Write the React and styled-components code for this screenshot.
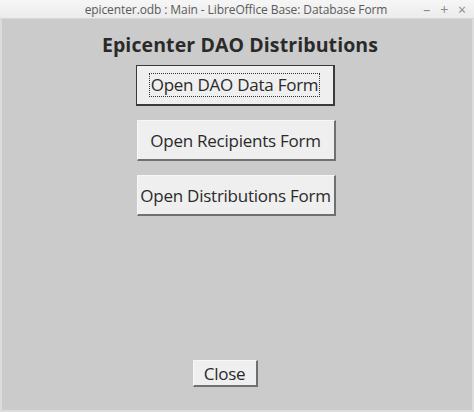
import React from 'react';
import styled, { createGlobalStyle } from 'styled-components';

const Global = createGlobalStyle`
  html, body {
    margin: 0;
    padding: 0;
    background: #cbcbcb;
  }
  body {
    font-family: "Open Sans", "Noto Sans", "DejaVu Sans", sans-serif;
  }
`;

const Window = styled.div`
  width: 474px;
  height: 412px;
  display: flex;
  flex-direction: column;
  box-sizing: border-box;
  overflow: hidden;
`;

const TitleBar = styled.div`
  height: 18px;
  flex: none;
  display: flex;
  align-items: center;
  justify-content: center;
  position: relative;
  background: linear-gradient(#f6f6f6, #ebebeb);
  border-bottom: 1px solid #d8d8d8;
  color: #5a5a5a;
  font-size: 12px;
  letter-spacing: -0.1px;
  padding-right: 2px;
`;

const Controls = styled.div`
  position: absolute;
  right: 8px;
  top: 0;
  height: 18px;
  display: flex;
  align-items: center;
  gap: 10px;
  color: #8a8a8a;
  font-size: 14px;
`;

const Body = styled.div`
  flex: 1;
  display: flex;
  flex-direction: column;
  align-items: center;
  background: #cbcbcb;
  border-left: 2px solid #dcdcdc;
  border-right: 2px solid #dcdcdc;
  border-bottom: 2px solid #dcdcdc;
  padding-top: 13px;
  padding-bottom: 23px;
`;

const Heading = styled.h1`
  margin: 0 0 7px 6px;
  font-size: 19.5px;
  font-weight: 700;
  color: #2a2a2a;
  line-height: 26px;
  letter-spacing: 0.1px;
`;

const FormButton = styled.button`
  width: 199px;
  height: 41px;
  margin: ${p => (p.$focused ? '0 4px 14px 0' : '0 2px 14px 0')};
  box-sizing: border-box;
  background: #efefef;
  font-family: inherit;
  font-size: 17px;
  letter-spacing: -0.25px;
  white-space: nowrap;
  color: #2a2a2a;
  padding: 0;
  border: none;
  border-top: 1px solid ${p => (p.$focused ? '#3a3a3a' : '#f7f7f7')};
  border-left: 1px solid ${p => (p.$focused ? '#3a3a3a' : '#f7f7f7')};
  border-right: 2px solid ${p => (p.$focused ? '#3a3a3a' : '#707070')};
  border-bottom: 2px solid ${p => (p.$focused ? '#3a3a3a' : '#707070')};
  display: flex;
  align-items: center;
  justify-content: center;
`;

const FocusLabel = styled.span`
  outline: 1px dotted #333;
  padding: 0 1px;
  line-height: 22px;
`;

const Spacer = styled.div`
  flex: 1;
`;

const CloseButton = styled(FormButton)`
  width: 65px;
  height: 27px;
  margin: 0 24px 0 0;
`;

export default function App() {
  return (
    <>
      <Global />
      <Window>
        <TitleBar>
          epicenter.odb : Main - LibreOffice Base: Database Form
          <Controls>
            <span>–</span>
            <span>+</span>
            <span>×</span>
          </Controls>
        </TitleBar>
        <Body>
          <Heading>Epicenter DAO Distributions</Heading>
          <FormButton $focused>
            <FocusLabel>Open DAO Data Form</FocusLabel>
          </FormButton>
          <FormButton>Open Recipients Form</FormButton>
          <FormButton>Open Distributions Form</FormButton>
          <Spacer />
          <CloseButton>Close</CloseButton>
        </Body>
      </Window>
    </>
  );
}
